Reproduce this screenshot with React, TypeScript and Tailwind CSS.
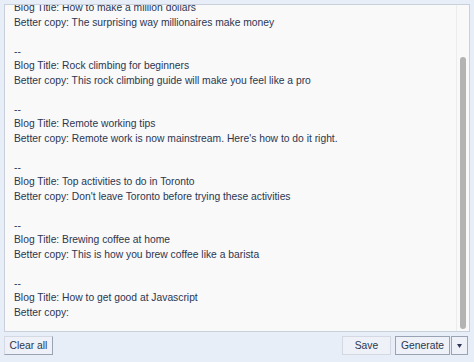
import React from "react";

const lines: string[] = [
  "Blog Title: How to make a million dollars",
  "Better copy: The surprising way millionaires make money",
  "",
  "--",
  "Blog Title: Rock climbing for beginners",
  "Better copy: This rock climbing guide will make you feel like a pro",
  "",
  "--",
  "Blog Title: Remote working tips",
  "Better copy: Remote work is now mainstream. Here's how to do it right.",
  "",
  "--",
  "Blog Title: Top activities to do in Toronto",
  "Better copy: Don't leave Toronto before trying these activities",
  "",
  "--",
  "Blog Title: Brewing coffee at home",
  "Better copy: This is how you brew coffee like a barista",
  "",
  "--",
  "Blog Title: How to get good at Javascript",
  "Better copy:",
];

export default function App() {
  return (
    <div
      className="w-[474px] h-[362px] bg-[#e8eef8] flex flex-col overflow-hidden"
      style={{ fontFamily: '"Liberation Sans", Arial, sans-serif' }}
    >
      <div className="mx-[4px] mt-[4px] h-[328px] flex border border-[#c9d0dc] bg-[#f9f9f9] overflow-hidden">
        <div className="flex-1 overflow-hidden pl-[9px]">
          <div className="mt-[-4px] text-[10.3px] leading-[14.5px] text-[#2c3650]">
            {lines.map((l, i) => (
              <div key={i} className="h-[14.5px] whitespace-pre">
                {l}
              </div>
            ))}
          </div>
        </div>
        <div className="w-[13px] flex flex-col border-l border-[#ececec] bg-[#f9f9f9] pt-[52px] pb-[2px] items-center">
          <div className="w-[6px] flex-1 rounded-[3px] bg-[#b3b3b3]" />
        </div>
      </div>
      <div className="flex items-center mt-[4px] px-[4px]">
        <button className="h-[19px] w-[49px] text-[10.3px] text-[#2c3650] bg-[#eef1f7] border border-[#d3d8e2] border-r-[#9aa3b3] border-b-[#9aa3b3]">
          Clear all
        </button>
        <div className="flex-1" />
        <button className="h-[19px] w-[49px] text-[10.3px] text-[#2c3650] bg-[#eef1f7] border border-[#d3d8e2]">
          Save
        </button>
        <button className="ml-[4px] h-[19px] w-[55px] text-[10.3px] text-[#2c3650] bg-[#eef1f7] border border-[#9aa3b3]">
          Generate
        </button>
        <button className="ml-[1px] mr-[2px] h-[19px] w-[17px] flex items-center justify-center bg-[#eef1f7] border border-[#9aa3b3]">
          <svg width="5" height="4" viewBox="0 0 5 4">
            <path d="M0 0 L5 0 L2.5 4 Z" fill="#2c3650" />
          </svg>
        </button>
      </div>
    </div>
  );
}
